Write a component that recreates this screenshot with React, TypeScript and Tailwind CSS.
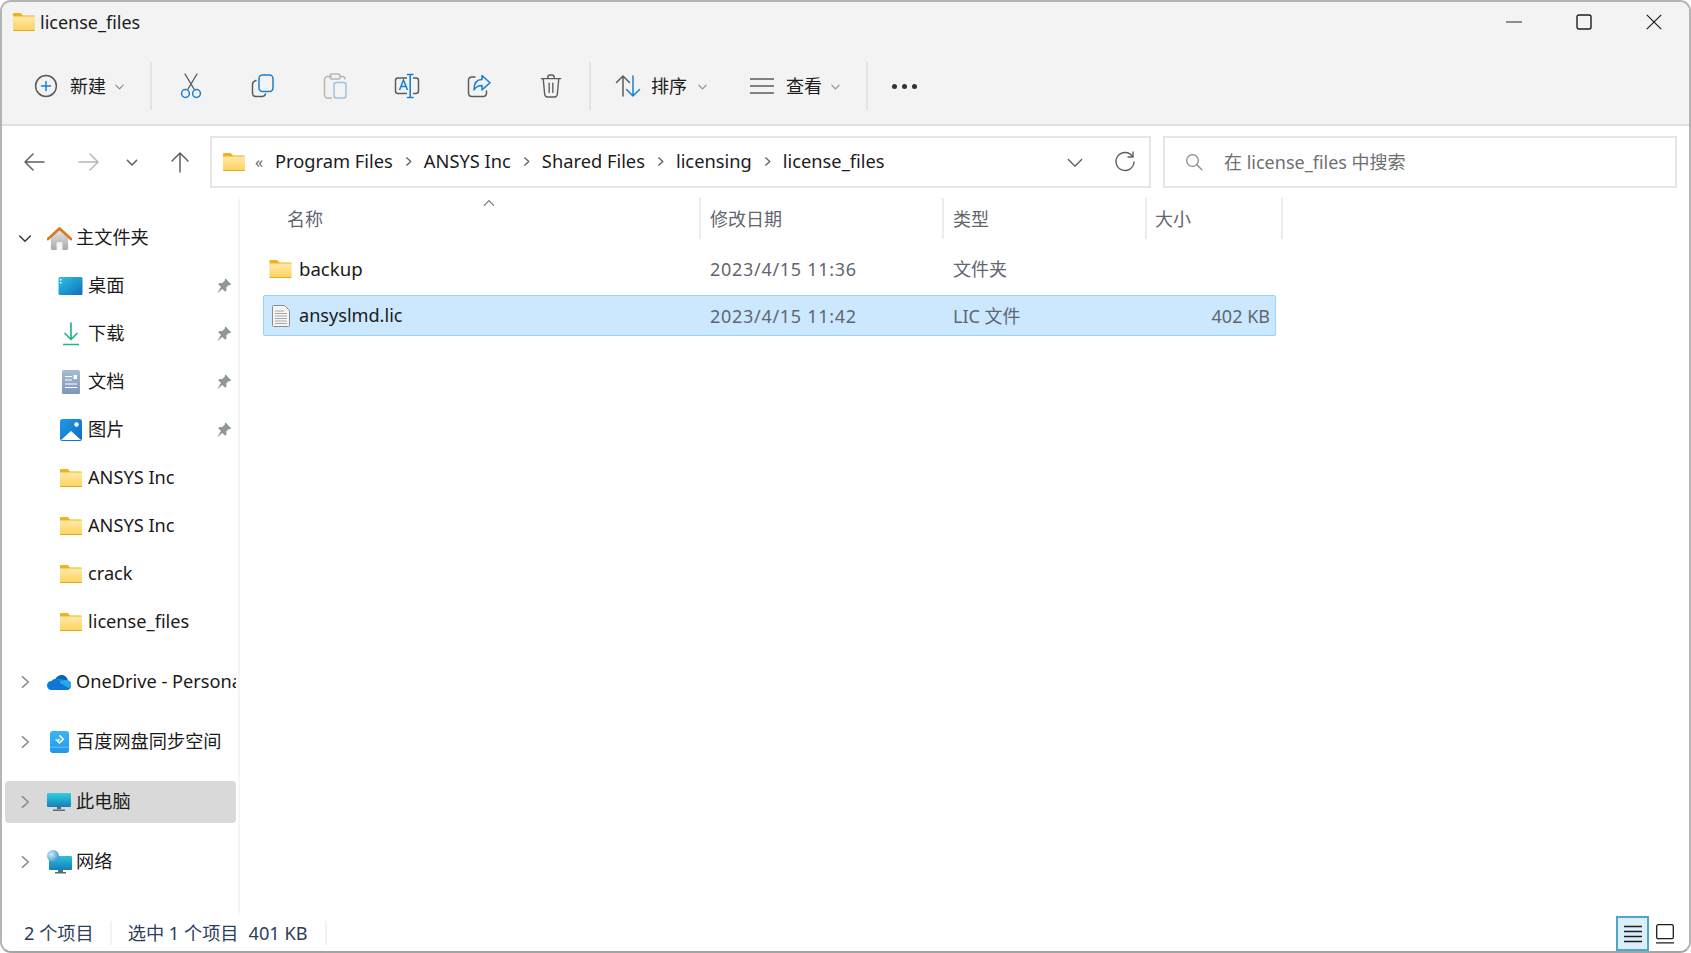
import React from "react";

const font = "font-['Noto_Sans','Noto_Sans_CJK_SC',sans-serif]";

function Folder({ className = "w-[22px] h-[18px]", id }: { className?: string; id: string }) {
  return (
    <svg viewBox="0 0 22 18" className={`shrink-0 ${className}`}>
      <defs>
        <linearGradient id={id} x1="0" y1="0" x2="0" y2="1">
          <stop offset="0" stopColor="#ffeaa6" />
          <stop offset="1" stopColor="#fcd25f" />
        </linearGradient>
      </defs>
      <path d="M0 1.2C0 .5.5 0 1.2 0h6.3l2.6 2.4h10.7c.7 0 1.2.5 1.2 1.2V5H0z" fill="#f2b01e" />
      <path d="M0 3.6h22v13.2c0 .7-.5 1.2-1.2 1.2H1.2C.5 18 0 17.500 0 16.800z" fill={`url(#${id})`} />
      <path d="M0 17h22v.2c0 .5-.4.8-.9.8H.9c-.5 0-.9-.3-.9-.8z" fill="#e8a91c" />
    </svg>
  );
}

function Chev({ dir = "down", className = "", color = "#6b6b6b", size = 12, sw = 1.2 }: { dir?: "down" | "right" | "up"; className?: string; color?: string; size?: number; sw?: number }) {
  const d = dir === "down" ? "M2 4.500l4 4 4-4" : dir === "up" ? "M2 8l4-4 4 4" : "M4 2l4.500 4-4.500 4";
  return (
    <svg viewBox="0 0 12 12" width={size} height={size} className={`shrink-0 ${className}`}>
      <path d={d} fill="none" stroke={color} strokeWidth={sw} strokeLinecap="round" strokeLinejoin="round" />
    </svg>
  );
}

function ToolSep() {
  return <div className="w-[2px] h-[48px] bg-[#e3e3e3] shrink-0" />;
}

const G = "#5c5c5c";
const B = "#1a7fd0";

function IconBtn({ children }: { children: React.ReactNode }) {
  return <div className="w-[72px] h-[48px] flex items-center justify-center shrink-0">{children}</div>;
}

function Toolbar() {
  return (
    <div className="h-[76px] flex items-center pl-[10px] pt-[6px] text-[18px] text-[#1c1c1c] border-b-2 border-[#e1e1e1] bg-[#f3f3f3] box-content shrink-0">
      <div className="w-[138px] flex items-center shrink-0 pl-[22px]">
        <svg viewBox="0 0 24 24" className="w-[24px] h-[24px] shrink-0">
          <circle cx="12" cy="12" r="10.400" fill="none" stroke={G} strokeWidth="1.500" />
          <path d="M12 7.500v9M7.500 12h9" stroke={B} strokeWidth="1.500" strokeLinecap="round" />
        </svg>
        <span className="ml-[12px] leading-none">新建</span>
        <Chev className="ml-[8px]" size={11} color="#8a8a8a" />
      </div>
      <ToolSep />
      <div className="ml-[3px] flex items-center">
        <IconBtn>
          <svg viewBox="0 0 24 26" className="w-[24px] h-[26px]">
            <path d="M6 1l9 15M18 1L9 16" stroke={G} strokeWidth="1.400" fill="none" strokeLinecap="round" />
            <circle cx="6.500" cy="20.500" r="3.900" fill="none" stroke={B} strokeWidth="1.500" />
            <circle cx="17.500" cy="20.500" r="3.900" fill="none" stroke={B} strokeWidth="1.500" />
          </svg>
        </IconBtn>
        <IconBtn>
          <svg viewBox="0 0 24 24" className="w-[24px] h-[24px]">
            <path d="M5 6.500C3 7 1.500 8 1.500 10.500V19c0 2 1.500 3.500 3.500 3.500h6c2 0 3-1 3.500-2.500" fill="none" stroke={G} strokeWidth="1.500" strokeLinecap="round" />
            <rect x="8" y="1" width="14" height="16.500" rx="3.500" fill="none" stroke={B} strokeWidth="1.500" />
          </svg>
        </IconBtn>
        <IconBtn>
          <svg viewBox="0 0 24 26" className="w-[24px] h-[26px] opacity-40">
            <path d="M9 3.500H4.500C3 3.500 1.500 5 1.500 6.500v15c0 2 1.500 3.500 3 3.500H9" fill="none" stroke={G} strokeWidth="1.500" />
            <rect x="7" y="1" width="10" height="5" rx="1.500" fill="none" stroke={G} strokeWidth="1.500" />
            <path d="M17 3.500h2.500C21 3.500 22 5 22 6.500" fill="none" stroke={G} strokeWidth="1.500" />
            <rect x="11" y="9.500" width="12" height="15.500" rx="2.500" fill="none" stroke={B} strokeWidth="1.500" />
          </svg>
        </IconBtn>
        <IconBtn>
          <svg viewBox="0 0 26 26" className="w-[26px] h-[26px]">
            <path d="M13 5H4C2.500 5 1.500 6 1.500 7.500v10.500C1.500 19.500 2.500 20.500 4 20.500h9M19 5h3c1.500 0 2.500 1 2.500 2.500v10.500c0 1.500-1 2.500-2.500 2.500h-3" fill="none" stroke={G} strokeWidth="1.500" />
            <path d="M5.500 17l4-10 4 10M7 13.500h5" fill="none" stroke={B} strokeWidth="1.500" />
            <path d="M13.500 1.500h5.500M16.200 1.500v23M13.500 24.500h5.500" fill="none" stroke={B} strokeWidth="1.600" strokeLinecap="round" />
          </svg>
        </IconBtn>
        <IconBtn>
          <svg viewBox="0 0 24 24" className="w-[24px] h-[24px]">
            <path d="M8 3H5C3 3 1.500 4.500 1.500 6.500v12.500C1.500 21 3 22.500 5 22.500h11c2 0 3.500-1.500 3.500-3.500v-2" fill="none" stroke={G} strokeWidth="1.500" strokeLinecap="round" />
            <path d="M15 1.500l8 7.200-8 7.200v-4.400c-3.500 0-6 1-8 4.500 0-6 2.500-10.500 8-10.500z" fill="none" stroke={B} strokeWidth="1.500" strokeLinejoin="round" />
          </svg>
        </IconBtn>
        <IconBtn>
          <svg viewBox="0 0 24 26" className="w-[22px] h-[24px]">
            <path d="M1.500 5h21M8.500 5V3.500C8.500 2 9.500 1 11 1h2c1.500 0 2.500 1 2.500 2.500V5" fill="none" stroke={G} strokeWidth="1.500" strokeLinecap="round" />
            <path d="M3.500 5l1.600 17c.2 1.700 1.400 3 3 3h7.800c1.600 0 2.800-1.300 3-3L20.500 5" fill="none" stroke={G} strokeWidth="1.500" />
            <path d="M10 10v10M14 10v10" stroke={G} strokeWidth="1.500" strokeLinecap="round" />
          </svg>
        </IconBtn>
      </div>
      <div className="ml-[2px]"><ToolSep /></div>
      <div className="ml-[24px] flex items-center shrink-0">
        <svg viewBox="0 0 26 24" className="w-[26px] h-[24px] shrink-0">
          <path d="M8 22V2M1.500 8.500L8 2l6.500 6.500" fill="none" stroke={G} strokeWidth="1.500" strokeLinecap="round" strokeLinejoin="round" />
          <path d="M18 2v20M11.500 15.500L18 22l6.500-6.500" fill="none" stroke={B} strokeWidth="1.500" strokeLinecap="round" strokeLinejoin="round" />
        </svg>
        <span className="ml-[10px] leading-none">排序</span>
        <Chev className="ml-[10px]" size={11} color="#8a8a8a" />
      </div>
      <div className="ml-[42px] flex items-center shrink-0">
        <svg viewBox="0 0 24 18" className="w-[24px] h-[18px] shrink-0">
          <path d="M0 2h24M0 9h24M0 16h24" stroke={G} strokeWidth="1.500" fill="none" />
        </svg>
        <span className="ml-[12px] leading-none">查看</span>
        <Chev className="ml-[8px]" size={11} color="#8a8a8a" />
      </div>
      <div className="ml-[25px]"><ToolSep /></div>
      <div className="ml-[24px] flex gap-[5px]">
        <div className="w-[5px] h-[5px] rounded-full bg-[#333333]" />
        <div className="w-[5px] h-[5px] rounded-full bg-[#333333]" />
        <div className="w-[5px] h-[5px] rounded-full bg-[#333333]" />
      </div>
    </div>
  );
}

function Arrow({ dir, color }: { dir: "left" | "right" | "up"; color: string }) {
  const d = dir === "left" ? "M2 11h19M10 3l-8 8 8 8" : dir === "right" ? "M20 11H1M12 3l8 8-8 8" : "M11 21V2M3 10l8-8 8 8";
  return (
    <svg viewBox="0 0 22 22" className="w-[22px] h-[22px] shrink-0">
      <path d={d} fill="none" stroke={color} strokeWidth="1.500" strokeLinecap="round" strokeLinejoin="round" />
    </svg>
  );
}

function Crumb({ children }: { children: React.ReactNode }) {
  return <span className="whitespace-nowrap text-[18.3px] -mt-[1px]">{children}</span>;
}

function CrumbSep() {
  return <Chev dir="right" size={11} color="#5f5f5f" sw={1.400} className="mx-[10px]" />;
}

function NavRow() {
  return (
    <div className="h-[71px] flex items-center pl-[21px] text-[18px] text-[#1c1c1c] bg-white shrink-0">
      <div className="w-[22px] flex justify-center"><Arrow dir="left" color="#5f5f5f" /></div>
      <div className="ml-[33px] w-[22px] flex justify-center"><Arrow dir="right" color="#b5b5b5" /></div>
      <div className="ml-[25px] w-[14px] flex justify-center"><Chev size={14} color="#5f5f5f" sw={1.300} /></div>
      <div className="ml-[30px] w-[22px] flex justify-center"><Arrow dir="up" color="#5f5f5f" /></div>
      <div className="ml-[19px] w-[941px] h-[52px] border-2 border-[#e5e5e5] flex items-center pl-[11px] shrink-0">
        <Folder id="f-addr" className="w-[22px] h-[18px]" />
        <span className="ml-[4px] text-[#6b6b6b] text-[16px] w-[20px] text-center">«</span>
        <span className="ml-[6px] flex items-center">
          <Crumb>Program Files</Crumb>
          <CrumbSep />
          <Crumb>ANSYS Inc</Crumb>
          <CrumbSep />
          <Crumb>Shared Files</Crumb>
          <CrumbSep />
          <Crumb>licensing</Crumb>
          <CrumbSep />
          <Crumb>license_files</Crumb>
        </span>
        <div className="ml-auto flex items-center pr-[12px]">
          <Chev size={20} color="#5f5f5f" sw={0.800} />
          <svg viewBox="0 0 24 24" className="w-[24px] h-[24px] ml-[28px]">
            <path d="M19.500 6.500A9 9 0 1 0 21 12" fill="none" stroke="#5f5f5f" strokeWidth="1.400" strokeLinecap="round" />
            <path d="M20 2v5h-5" fill="none" stroke="#5f5f5f" strokeWidth="1.400" strokeLinecap="round" strokeLinejoin="round" />
          </svg>
        </div>
      </div>
      <div className="ml-[12px] w-[514px] h-[52px] border-2 border-[#e5e5e5] flex items-center pl-[20px] text-[#6f6f6f] shrink-0">
        <svg viewBox="0 0 18 18" className="w-[18px] h-[18px] shrink-0">
          <circle cx="7.500" cy="7.500" r="5.800" fill="none" stroke="#8a8a8a" strokeWidth="1.300" />
          <path d="M11.800 11.800l5 5" stroke="#8a8a8a" strokeWidth="1.300" strokeLinecap="round" />
        </svg>
        <span className="ml-[21px] pt-[1px] whitespace-nowrap">在 license_files 中搜索</span>
      </div>
    </div>
  );
}

function Pin() {
  return (
    <svg viewBox="0 0 16 16" className="w-[16px] h-[16px] shrink-0">
      <path d="M9.800.8l5.400 5.400-1.300 1-1-.2-2.600 2.600.2 2.800-1.300 1.300-2.800-2.800-5.400 4.300L5 9 2.200 6.200l1.300-1.300 2.800.2L8.900 2.500l-.2-1z" fill="#8e979c" />
    </svg>
  );
}

function NavItem({ icon, label, h = "h-[48px]", pin, chev, indent, active }: { icon: React.ReactNode; label: string; h?: string; pin?: boolean; chev?: "down" | "right"; indent?: boolean; active?: boolean }) {
  return (
    <div className={`${h} flex items-center mr-[2px] rounded-[4px] relative overflow-hidden ${active ? "bg-[#d9d9d9]" : ""}`}>
      {indent ? (
        <div className="w-[48px] shrink-0" />
      ) : (
        <div className="w-[37px] shrink-0 pl-[12px] flex">
          {chev === "down" ? <Chev size={16} color="#3a3a3a" sw={1.100} /> : <Chev dir="right" size={16} color="#8a8a8a" sw={1.100} />}
        </div>
      )}
      <div className={`${indent ? "w-[35px]" : "w-[34px]"} shrink-0 flex justify-center`}>{icon}</div>
      <span className="whitespace-nowrap flex-1 overflow-hidden">{label}</span>
      {pin && <div className="mr-[4px] shrink-0"><Pin /></div>}
    </div>
  );
}

function HomeIcon() {
  return (
    <svg viewBox="0 0 26 24" className="w-[25px] h-[23px]">
      <defs>
        <linearGradient id="hm" x1="0" y1="0" x2="0" y2="1"><stop offset="0" stopColor="#e4e4e4" /><stop offset="1" stopColor="#a9a9a9" /></linearGradient>
      </defs>
      <path d="M4 11L13 3l9 8v11.500c0 .8-.7 1.500-1.500 1.500h-15c-.8 0-1.500-.7-1.500-1.500z" fill="url(#hm)" />
      <path d="M10 24v-8h6v8z" fill="#f7f7f7" />
      <path d="M1 12.500L13 1.500l12 11" fill="none" stroke="#d9781f" strokeWidth="2.800" strokeLinecap="round" strokeLinejoin="round" />
    </svg>
  );
}

function DesktopIcon() {
  return (
    <svg viewBox="0 0 24 18" className="w-[25px] h-[18px]">
      <defs>
        <linearGradient id="dk" x1="0" y1="0" x2="1" y2="1"><stop offset="0" stopColor="#2fc4e0" /><stop offset="1" stopColor="#0f6ec0" /></linearGradient>
      </defs>
      <rect width="24" height="18" rx="1.500" fill="url(#dk)" />
      <rect x="1.500" y="2" width="1.500" height="1.500" fill="#e8fbff" />
      <rect x="1.500" y="5" width="1.500" height="1.500" fill="#e8fbff" />
    </svg>
  );
}

function DownloadIcon() {
  return (
    <svg viewBox="0 0 18 24" className="w-[18px] h-[24px]">
      <path d="M9 1v16M3 11.500l6 6 6-6" fill="none" stroke="#2bb090" strokeWidth="1.700" strokeLinecap="round" strokeLinejoin="round" />
      <path d="M1 22.500h16" stroke="#2bb090" strokeWidth="1.700" />
    </svg>
  );
}

function DocIcon() {
  return (
    <svg viewBox="0 0 18 24" className="w-[18px] h-[24px]">
      <defs>
        <linearGradient id="dc" x1="0" y1="0" x2="0" y2="1"><stop offset="0" stopColor="#a9bbd3" /><stop offset="1" stopColor="#7b97ba" /></linearGradient>
      </defs>
      <rect width="18" height="24" rx="1.500" fill="url(#dc)" />
      <path d="M3 6.500h7M3 10h7M3 14h12M3 17.500h12" stroke="#fff" strokeWidth="1.200" />
      <rect x="11.500" y="5" width="3.500" height="4" fill="#fff" />
    </svg>
  );
}

function PicIcon() {
  return (
    <svg viewBox="0 0 22 22" className="w-[22px] h-[22px]">
      <defs>
        <linearGradient id="pc" x1="0" y1="0" x2="1" y2="1"><stop offset="0" stopColor="#1f9be8" /><stop offset="1" stopColor="#0f6cc4" /></linearGradient>
      </defs>
      <rect width="22" height="22" rx="2.500" fill="url(#pc)" />
      <path d="M1 21l10-9 10 9z" fill="#fff" />
      <circle cx="16.500" cy="5.500" r="2.200" fill="#fff" />
    </svg>
  );
}

function CloudIcon() {
  return (
    <svg viewBox="0 0 24 15" className="w-[24px] h-[15px]">
      <path d="M8 4.500C9.500 1.500 12 0 14.500 0c3.500 0 6 2.500 6.500 5.500l-9 5z" fill="#0364b8" />
      <path d="M8 4.500c1.500-.8 3-1 4.500-.5l8.500 1.500c1.800.2 3 1.800 3 3.500L12 11z" fill="#1490df" />
      <path d="M4.500 15C2 15 0 13 0 10.500S2 6 4.500 6c1-1.500 2.500-2 4-2 2 0 3.500 1 4.500 2.500l11 4c0 2.500-1.500 4.500-4 4.500z" fill="#0f78d4" />
      <path d="M13 6.500c3-1 6-1.500 8-1 1.800.2 3 1.800 3 3.500 0 1.800-1 3-2.500 4L13 8z" fill="#28a8ea" />
    </svg>
  );
}

function BaiduIcon() {
  return (
    <svg viewBox="0 0 20 23" className="w-[19px] h-[22px]">
      <defs>
        <linearGradient id="bd" x1="0" y1="0" x2="0" y2="1"><stop offset="0" stopColor="#39b6f5" /><stop offset="1" stopColor="#2396ee" /></linearGradient>
      </defs>
      <rect width="20" height="23" rx="3" fill="url(#bd)" />
      <path d="M10 4.500L14 8.500l-4 4-2-2 2-2" fill="none" stroke="#fff" strokeWidth="1.600" />
      <path d="M6 8.500l4 4" stroke="#d7f1ff" strokeWidth="1.600" />
      <path d="M0 17h20" stroke="#7fd0f8" strokeWidth="0.800" />
    </svg>
  );
}

function PcIcon({ id }: { id: string }) {
  return (
    <svg viewBox="0 0 24 18" className="w-[24px] h-[18px]">
      <defs>
        <linearGradient id={id} x1="0" y1="0" x2="0" y2="1"><stop offset="0" stopColor="#2fd0e0" /><stop offset="1" stopColor="#1180b8" /></linearGradient>
      </defs>
      <rect width="24" height="14" rx="1" fill={`url(#${id})`} />
      <path d="M10 14h4v2h-4zM6 16.500h12V18H6z" fill="#5a6b78" />
    </svg>
  );
}

function NetIcon() {
  return (
    <svg viewBox="0 0 25 24" className="w-[25px] h-[24px]">
      <defs>
        <linearGradient id="nt" x1="0" y1="0" x2="0" y2="1"><stop offset="0" stopColor="#2fc0d8" /><stop offset="1" stopColor="#1180b8" /></linearGradient>
        <radialGradient id="gb" cx=".35" cy=".35" r=".7"><stop offset="0" stopColor="#cfeefc" /><stop offset="1" stopColor="#3d95d5" /></radialGradient>
      </defs>
      <rect x="2" y="6" width="23" height="14" rx="1" fill="url(#nt)" />
      <path d="M11 20h5v2h-5zM8 22h11v1.500H8z" fill="#5a6b78" />
      <circle cx="6" cy="6" r="6" fill="url(#gb)" />
    </svg>
  );
}

function Sidebar() {
  return (
    <div className="w-[236px] shrink-0 border-r-2 border-[#f5f5f5] pt-[17px] text-[18.2px] text-[#1a1a1a] box-content overflow-hidden">
      <div className="pl-[3px]">
        <NavItem chev="down" icon={<HomeIcon />} label="主文件夹" />
        <NavItem indent pin icon={<DesktopIcon />} label="桌面" />
        <NavItem indent pin icon={<DownloadIcon />} label="下载" />
        <NavItem indent pin icon={<DocIcon />} label="文档" />
        <NavItem indent pin icon={<PicIcon />} label="图片" />
        <NavItem indent icon={<Folder id="s1" className="w-[22px] h-[18px]" />} label="ANSYS Inc" />
        <NavItem indent icon={<Folder id="s2" className="w-[22px] h-[18px]" />} label="ANSYS Inc" />
        <NavItem indent icon={<Folder id="s3" className="w-[22px] h-[18px]" />} label="crack" />
        <NavItem indent icon={<Folder id="s4" className="w-[22px] h-[18px]" />} label="license_files" />
        <div className="h-[6px]" />
        <NavItem chev="right" h="h-[60px]" icon={<CloudIcon />} label="OneDrive - Personal" />
        <NavItem chev="right" h="h-[60px]" icon={<BaiduIcon />} label="百度网盘同步空间" />
        <div className="h-[60px] flex items-center">
          <div className="w-full"><NavItem active chev="right" h="h-[42px]" icon={<PcIcon id="pc1" />} label="此电脑" /></div>
        </div>
        <NavItem chev="right" h="h-[60px]" icon={<NetIcon />} label="网络" />
      </div>
    </div>
  );
}

const cols = "grid grid-cols-[437px_243px_203px_136px]";

function FileIcon() {
  return (
    <svg viewBox="0 0 18 22" className="w-[18px] h-[22px] shrink-0">
      <path d="M.5 1.500c0-.6.4-1 1-1h11l5 5v15c0 .6-.4 1-1 1h-15c-.6 0-1-.4-1-1z" fill="#f5f5f5" stroke="#8c8c8c" />
      <path d="M3 6h9M3 8.500h12M3 11h12M3 13.500h12M3 16h12M3 18.500h12" stroke="#a8a8a8" />
    </svg>
  );
}

function FileList() {
  return (
    <div className="flex-1 min-w-0 pl-[24px] text-[18px]">
      <div className={`${cols} h-[41px] mt-[1px] text-[#5f6670] relative`}>
        <div className="relative flex items-center pl-[23px] pt-[1px] border-r-2 border-[#ececec] h-full">
          名称
          <div className="absolute left-[218px] -top-[2px]"><Chev dir="up" size={14} color="#6b6b6b" sw={0.900} /></div>
        </div>
        <div className="flex items-center pl-[9px] pt-[1px] border-r-2 border-[#ececec] h-full">修改日期</div>
        <div className="flex items-center pl-[9px] pt-[1px] border-r-2 border-[#ececec] h-full">类型</div>
        <div className="flex items-center pl-[8px] pt-[1px] border-r-2 border-[#ececec] h-full">大小</div>
      </div>
      <div className={`${cols} h-[48px] mt-[6px] items-center text-[#5f6670]`}>
        <div className="flex items-center pl-[5px] text-[#1a1a1a]">
          <Folder id="b1" className="w-[23px] h-[18px]" />
          <span className="ml-[7px] text-[18.6px]">backup</span>
        </div>
        <div className="pl-[9px] tracking-[0.7px]">2023/4/15 11:36</div>
        <div className="pl-[9px]">文件夹</div>
        <div />
      </div>
      <div className="w-[1013px] h-[41px] mt-[2px] -ml-[1px] bg-[#cce8ff] border border-[#99d1ff] rounded-[2px] flex items-center text-[#5f6670] pt-[1px]">
        <div className="w-[436px] flex items-center pl-[8px] text-[#1a1a1a] shrink-0">
          <FileIcon />
          <span className="ml-[9px] text-[18.1px]">ansyslmd.lic</span>
        </div>
        <div className="w-[243px] pl-[10px] shrink-0 tracking-[0.7px]">2023/4/15 11:42</div>
        <div className="w-[203px] pl-[10px] shrink-0">LIC 文件</div>
        <div className="flex-1 text-right pr-[5px]">402 KB</div>
      </div>
    </div>
  );
}

function StatusBar() {
  return (
    <div className="h-[36px] flex items-center bg-white text-[18.2px] text-[#2c3e5c] relative shrink-0">
      <span className="ml-[22px] pt-[1px] whitespace-nowrap">2 个项目</span>
      <div className="ml-[16px] w-[2px] h-[24px] bg-[#f3f3f3]" />
      <span className="ml-[16px] pt-[1px] whitespace-nowrap">选中 1 个项目</span>
      <span className="ml-[10px] pt-[1px] whitespace-nowrap">401 KB</span>
      <div className="ml-[17px] w-[2px] h-[24px] bg-[#f3f3f3]" />
      <div className="ml-auto flex items-end h-full pr-[13px]">
        <div className="w-[33px] h-[35px] border-2 border-[#4ea6c9] bg-[#dceefa] flex items-center justify-center">
          <svg viewBox="0 0 20 18" className="w-[20px] h-[18px]"><path d="M1 1.500h18M1 6.500h18M1 11.500h18M1 16.500h18" stroke="#1c1c1c" strokeWidth="1.300" /></svg>
        </div>
        <div className="w-[26px] h-[35px] ml-[1px] flex items-center justify-center pl-[4px]">
          <svg viewBox="0 0 18 20" className="w-[18px] h-[20px]">
            <rect x=".7" y=".7" width="16.600" height="14" rx="1.500" fill="none" stroke="#1c1c1c" strokeWidth="1.300" />
            <path d="M0 18.800h18" stroke="#1c1c1c" strokeWidth="1.300" />
          </svg>
        </div>
      </div>
    </div>
  );
}

export default function App() {
  return (
    <div className={`w-[1691px] h-[953px] bg-white overflow-hidden ${font}`}>
      <div className="h-full flex flex-col border-2 border-[#b4b4b4] border-b-[#a4a4a4] rounded-[11px] overflow-hidden bg-white">
        <div className="h-[40px] bg-[#f3f3f3] flex items-center pl-[11px] text-[18px] text-[#1c1c1c] shrink-0">
          <Folder id="f-title" className="w-[22px] h-[18px]" />
          <span className="ml-[5px]">license_files</span>
          <div className="ml-auto flex items-center h-full">
            <div className="w-[70px] flex justify-center">
              <svg viewBox="0 0 16 16" className="w-[16px] h-[16px]"><path d="M0 8h16" stroke="#2a2a2a" strokeWidth="1.200" /></svg>
            </div>
            <div className="w-[70px] flex justify-center">
              <svg viewBox="0 0 16 16" className="w-[16px] h-[16px]"><rect x="1" y="1" width="14" height="14" rx="2" fill="none" stroke="#1c1c1c" strokeWidth="1.400" /></svg>
            </div>
            <div className="w-[70px] flex justify-center">
              <svg viewBox="0 0 16 16" className="w-[16px] h-[16px]"><path d="M.8.8l14.400 14.400M15.200.8L.8 15.200" stroke="#1c1c1c" strokeWidth="1.200" /></svg>
            </div>
          </div>
        </div>
        <Toolbar />
        <NavRow />
        <div className="flex-1 min-h-0 flex">
          <Sidebar />
          <FileList />
        </div>
        <StatusBar />
      </div>
    </div>
  );
}
